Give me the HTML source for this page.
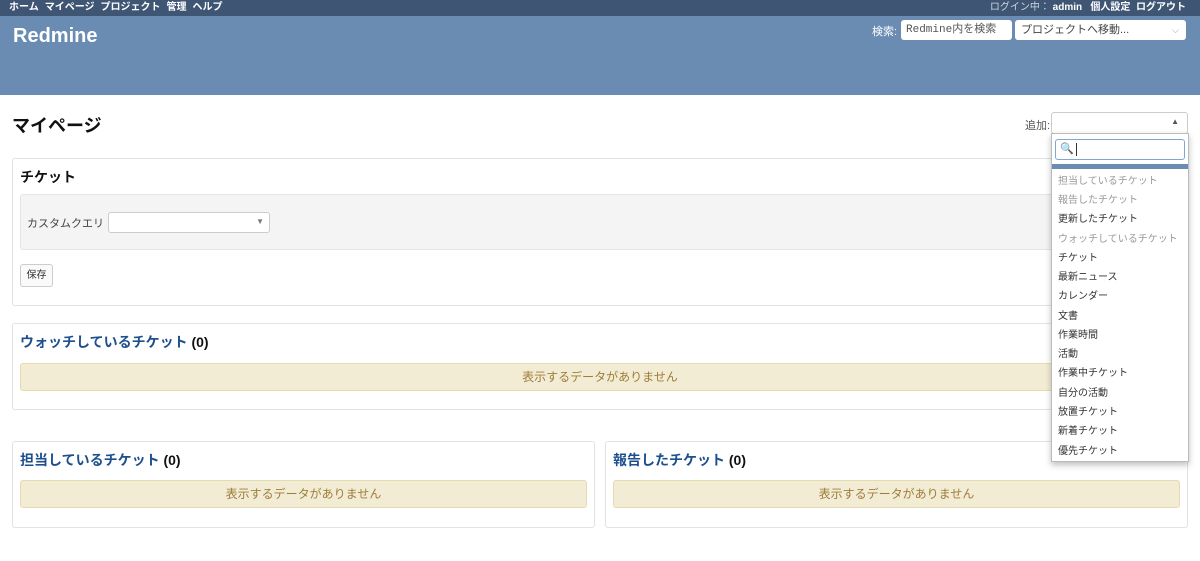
<!DOCTYPE html>
<html><head><meta charset="utf-8"><style>
*{box-sizing:border-box}
body{margin:0;width:1200px;height:561px;overflow:hidden;background:#fff;font-family:"Liberation Sans","Noto Sans CJK JP",sans-serif;font-size:12px;color:#333;position:relative}
.top{position:absolute;left:0;top:0;width:1200px;height:16px;background:#3e5574;color:#fff;font-size:10px;font-weight:bold;line-height:15px}
.top .l{position:absolute;left:9px}
.top .l span{margin-right:6px}
.top .r{position:absolute;right:14px}
.top .r .g{font-weight:normal;color:#ccd6e2}
.hdr{position:absolute;left:0;top:16px;width:1200px;height:79px;background:#6a8cb2}
.hdr h1{position:absolute;left:13px;top:9px;margin:0;color:#fff;font-size:20px;font-weight:bold}
.abs{position:absolute}
.box{position:absolute;border:1px solid #e2e2e2;border-radius:3px;background:#fff}
.nodata{position:absolute;background:#f2ecd4;border:1px solid #e6dbb0;border-radius:3px;color:#9f7d39;font-size:12px;text-align:center;line-height:26px;height:28px}
.h3{position:absolute;font-size:14px;font-weight:bold;color:#111}
.h3 a{color:#1d4f8f}
.dd{position:absolute;left:1051px;top:133px;width:138px;height:329px;background:#fff;border:1px solid #bbb;box-shadow:0 3px 6px rgba(0,0,0,.25);font-size:10px}
.dd div.i{position:absolute;left:6px}
</style></head><body>
<div class="top"><div class="l"><span>ホーム</span><span>マイページ</span><span>プロジェクト</span><span>管理</span><span>ヘルプ</span></div>
<div class="r"><span class="g">ログイン中：</span> admin &nbsp; 個人設定 &nbsp;ログアウト</div></div>
<div class="hdr"><h1>Redmine</h1>
<div class="abs" style="left:872px;top:7px;color:#fff;font-size:11px">検索:</div>
<div class="abs" style="left:901px;top:4px;width:111px;height:20px;background:#fff;border-radius:3px;font-size:11px;line-height:20px;padding-left:5px;color:#555;font-family:'Liberation Mono','Noto Sans CJK JP',monospace">Redmine内を検索</div>
<div class="abs" style="left:1015px;top:4px;width:171px;height:20px;background:#fff;border-radius:3px;font-size:11px;line-height:20px;padding-left:6px;color:#444">プロジェクトへ移動...<span style="position:absolute;right:7px;color:#999;font-size:9px">⌵</span></div>
</div>
<div class="abs" style="left:12px;top:112px;font-size:18px;font-weight:bold;color:#111">マイページ</div>
<div class="abs" style="left:1025px;top:117px;font-size:11px;color:#555">追加:</div>
<div class="abs" style="left:1051px;top:112px;width:137px;height:22px;border:1px solid #ccc;border-radius:3px;background:#fff"><span style="position:absolute;right:8px;top:4px;font-size:8px;color:#555">▲</span></div>

<div class="box" style="left:12px;top:158px;width:1176px;height:148px">
<div class="h3" style="left:7px;top:8px">チケット</div>
<div class="abs" style="left:7px;top:35px;width:1160px;height:56px;background:#f4f4f4;border:1px solid #e4e4e4;border-radius:3px">
<div class="abs" style="left:6px;top:20px;font-size:11px;color:#444">カスタムクエリ</div>
<div class="abs" style="left:87px;top:17px;width:162px;height:21px;background:#fff;border:1px solid #ccc;border-radius:3px"><span style="position:absolute;right:5px;top:4px;font-size:8px;color:#777">▼</span></div></div>
<div class="abs" style="left:7px;top:105px;width:33px;height:23px;border:1px solid #ccc;border-radius:3px;background:#fafafa;font-size:10px;text-align:center;line-height:21px">保存</div>
</div>
<div class="box" style="left:12px;top:323px;width:1176px;height:87px">
<div class="h3" style="left:7px;top:8px"><a>ウォッチしているチケット</a> (0)</div>
<div class="nodata" style="left:7px;top:39px;width:1160px">表示するデータがありません</div></div>
<div class="box" style="left:12px;top:441px;width:583px;height:87px">
<div class="h3" style="left:7px;top:8px"><a>担当しているチケット</a> (0)</div>
<div class="nodata" style="left:7px;top:38px;width:567px">表示するデータがありません</div></div>
<div class="box" style="left:605px;top:441px;width:583px;height:87px">
<div class="h3" style="left:7px;top:8px"><a>報告したチケット</a> (0)</div>
<div class="nodata" style="left:7px;top:38px;width:567px">表示するデータがありません</div></div>

<div class="dd">
<div class="abs" style="left:3px;top:5px;width:130px;height:21px;border:1px solid #7fa7d6;border-radius:3px"><span style="position:absolute;left:4px;top:2px;font-size:11px">🔍</span><span style="position:absolute;left:20px;top:3px;width:1px;height:13px;background:#333"></span></div>
<div class="abs" style="left:0;top:30px;width:136px;height:5px;background:#6a8cb2"></div>
<div class="i" style="top:38px;color:#999">担当しているチケット</div>
<div class="i" style="top:57px;color:#999">報告したチケット</div>
<div class="i" style="top:76px">更新したチケット</div>
<div class="i" style="top:96px;color:#999">ウォッチしているチケット</div>
<div class="i" style="top:115px">チケット</div>
<div class="i" style="top:134px">最新ニュース</div>
<div class="i" style="top:153px">カレンダー</div>
<div class="i" style="top:173px">文書</div>
<div class="i" style="top:192px">作業時間</div>
<div class="i" style="top:211px">活動</div>
<div class="i" style="top:230px">作業中チケット</div>
<div class="i" style="top:250px">自分の活動</div>
<div class="i" style="top:269px">放置チケット</div>
<div class="i" style="top:288px">新着チケット</div>
<div class="i" style="top:308px">優先チケット</div>
</div>
</body></html>
